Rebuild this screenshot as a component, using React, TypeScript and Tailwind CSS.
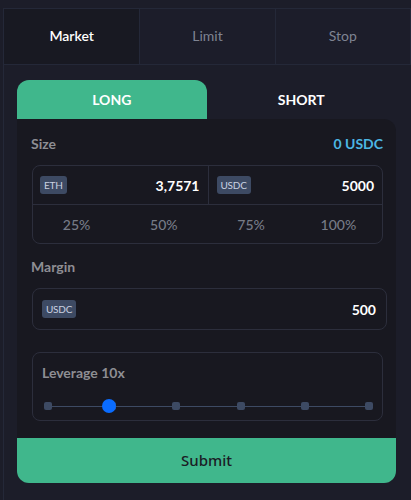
import { useState } from 'react';

const tabs = ['Market', 'Limit', 'Stop'];
const percents = ['25%', '50%', '75%', '100%'];
const ticks = [0, 1, 2, 3, 4, 5];

function Badge({ label }: { label: string }) {
  return (
    <span className="rounded-[3px] bg-[#3d4a63] px-[4px] py-[3px] text-[10px] leading-[12px] tracking-tight text-[#c9d1e0]">
      {label}
    </span>
  );
}

export default function App() {
  const [tab, setTab] = useState('Market');
  const [side, setSide] = useState('long');

  return (
    <div className="min-h-[500px] bg-[#1c1d29] pl-[3px] pt-[8px] font-['Lato',sans-serif] text-[14px]">
      <div className="min-h-[492px] border-l border-[#242838]">
        {/* Order type tabs */}
        <div className="grid h-[57px] grid-cols-3 border-y border-r border-[#242838]">
          {tabs.map((t, i) => (
            <button
              key={t}
              onClick={() => setTab(t)}
              className={
                'pb-[3px] ' +
                (i > 0 ? 'border-l border-[#242838] ' : '') +
                (tab === t ? 'bg-[#181922] font-semibold text-white' : 'bg-[#1c1d2a] text-[#7f8492]')
              }
            >
              {t}
            </button>
          ))}
        </div>

        <div className="pl-[13px] pr-[15px] pt-[15px]">
          {/* Long / Short */}
          <div className="grid h-[39px] grid-cols-2">
            <button
              onClick={() => setSide('long')}
              className={
                'rounded-t-[12px] font-bold text-white ' + (side === 'long' ? 'bg-[#40b78c]' : '')
              }
            >
              LONG
            </button>
            <button
              onClick={() => setSide('short')}
              className={
                'rounded-t-[12px] font-bold text-white ' + (side === 'short' ? 'bg-[#e0556a]' : '')
              }
            >
              SHORT
            </button>
          </div>

          <div className="rounded-tr-[12px] bg-[#181820] pb-[17px] pl-[14px] pr-[13px] pt-[14px]">
            <div className="flex h-[20px] items-center justify-between font-bold">
              <span className="text-[#8e8e93]">Size</span>
              <span className="text-[#4cb6e3]">0 USDC</span>
            </div>

            <div className="ml-[1px] mt-[12px] rounded-[8px] border border-[#2c2e3c]">
              <div className="grid h-[39px] grid-cols-2 border-b border-[#2c2e3c]">
                <div className="flex items-center justify-between pl-[7px] pr-[8px]">
                  <Badge label="ETH" />
                  <span className="font-bold text-white">3,7571</span>
                </div>
                <div className="flex items-center justify-between border-l border-[#2c2e3c] pl-[8px] pr-[8px]">
                  <Badge label="USDC" />
                  <span className="font-bold text-white">5000</span>
                </div>
              </div>
              <div className="grid h-[38px] grid-cols-4">
                {percents.map((p) => (
                  <button key={p} className="font-medium text-[#767b87]">
                    {p}
                  </button>
                ))}
              </div>
            </div>

            <div className="mt-[12px] flex h-[20px] items-center font-bold text-[#8e8e93]">Margin</div>

            <div className="ml-[1px] mr-[-4px] mt-[12px] flex h-[42px] items-center justify-between rounded-[8px] border border-[#2c2e3c] pl-[9px] pr-[10px]">
              <Badge label="USDC" />
              <span className="font-bold text-white">500</span>
            </div>

            <div className="ml-[1px] mt-[22px] h-[69px] rounded-[8px] border border-[#2c2e3c] pl-[9px] pr-[9px] pt-[10px]">
              <div className="h-[20px] font-bold leading-[20px] text-[#8e8e93]">Leverage 10x</div>
              <div className="relative ml-[2px] mt-[14px] flex h-[18px] items-center justify-between">
                <div className="absolute left-[4px] right-[4px] top-1/2 h-px bg-[#3d4a63]" />
                {ticks.map((t) => (
                  <span key={t} className="relative h-[8px] w-[8px] rounded-[2px] bg-[#3d4a63]" />
                ))}
                <span className="absolute left-[58px] top-[2px] h-[14px] w-[14px] rounded-full bg-[#0a6cff]" />
              </div>
            </div>
          </div>

          <button className="h-[45px] w-full rounded-b-[12px] bg-[#40b78c] font-['Noto_Sans',sans-serif] text-[15px] font-medium text-[#1b1c25]">
            Submit
          </button>
        </div>
      </div>
    </div>
  );
}
